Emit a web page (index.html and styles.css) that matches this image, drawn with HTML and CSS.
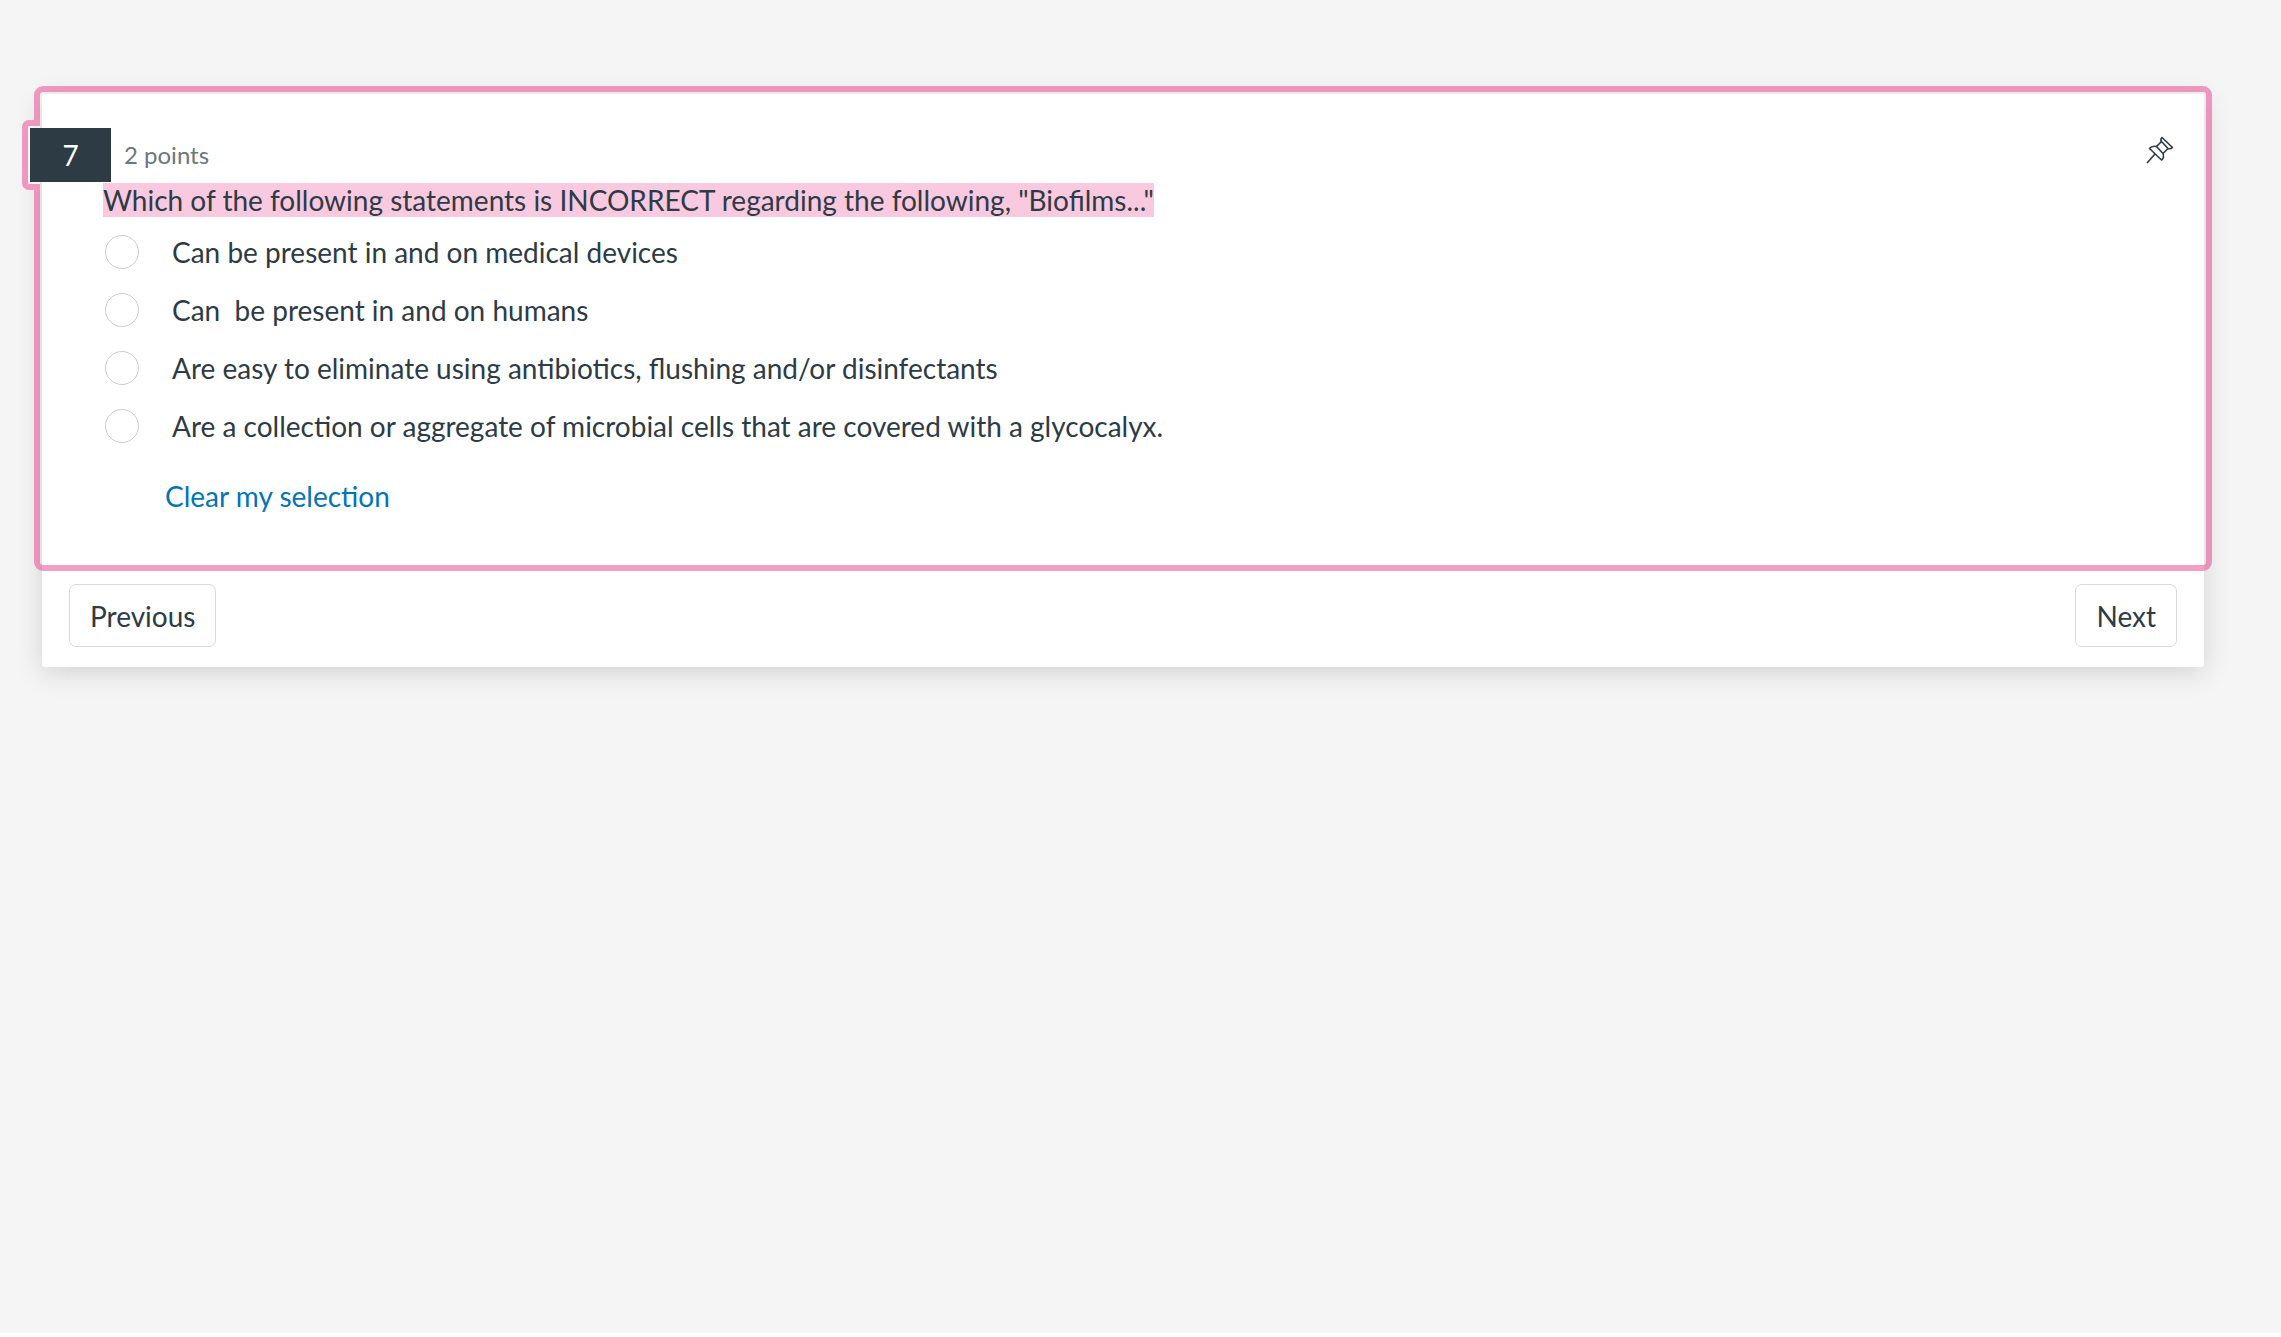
FILE: index.html
```html
<!DOCTYPE html>
<html lang="en">
<head>
    <meta charset="UTF-8">
    <meta name="viewport" content="width=device-width, initial-scale=1.0">
    <title>Quiz</title>
    <link rel="stylesheet" href="styles.css">
</head>
<body>
    <main class="card">
        <form class="question">
            <div class="question-header">
                <div class="number"><span class="number-label">7</span></div>
                <span class="points">2 points</span>
                <button type="button" class="pin" aria-label="Pin question">
                    <svg viewBox="0 0 28 28" width="28" height="28" fill="none" stroke="currentColor" stroke-width="1.6" stroke-linejoin="round">
                        <path d="M16 1.500 L26.500 11.500 C25 13 23.500 13 22 12.500 L15.500 5.500 C14.500 4 15 2.500 16 1.500 Z"/>
                        <path d="M15.500 5.500 L10.500 10.500 M22 12.500 L17 17.500"/>
                        <path d="M10.500 10.500 C8 10 5 10.500 3.500 12.500 L15.500 24 C17.500 22.500 18 20 17 17.500 Z"/>
                        <path d="M9 18 L1 27"/>
                    </svg>
                </button>
            </div>

            <fieldset class="options">
                <legend><span class="highlight">Which of the following statements is INCORRECT regarding the following, "Biofilms..."</span></legend>
                <label class="option"><input type="radio" name="answer" value="1">Can be present in and on medical devices</label>
                <label class="option"><input type="radio" name="answer" value="2">Can&nbsp; be present in and on humans</label>
                <label class="option"><input type="radio" name="answer" value="3">Are easy to eliminate using antibiotics, flushing and/or disinfectants</label>
                <label class="option"><input type="radio" name="answer" value="4">Are a collection or aggregate of microbial cells that are covered with a glycocalyx.</label>
            </fieldset>

            <button type="reset" class="clear">Clear my selection</button>
        </form>

        <nav class="footer">
            <button type="button" class="btn">Previous</button>
            <button type="button" class="btn">Next</button>
        </nav>
    </main>
</body>
</html>
```
FILE: styles.css
```css
* {
    box-sizing: border-box;
}
html {
    background-color: #fff;
}
body {
    min-height: calc(100vh - 4px);
    margin: 0;
    padding: 94px 77px 60px 42px;
    background-color: #f5f5f5;
    color: #2d3b45;
    font-family: Lato, sans-serif;
    font-size: 28px;
    line-height: 34px;
}
button {
    font: inherit;
    color: inherit;
    cursor: pointer;
}
.card {
    background-color: #fff;
    border-radius: 3px;
    box-shadow: 0 6px 28px rgba(0, 0, 0, 0.14);
}
.question {
    padding: 34px 26px 50px 61px;
    outline: 6px solid rgba(236, 72, 145, 0.53);
    outline-offset: 2px;
    border-radius: 1px;
}
.question-header {
    display: flex;
    align-items: center;
    height: 54px;
    margin-bottom: 1px;
}
.number {
    position: relative;
    z-index: 1;
    width: 81px;
    margin-left: -73px;
}
.number-label {
    display: block;
    line-height: 54px;
    text-align: center;
    color: #fff;
    background-color: #2d3b45;
}
/* pink frame that carries the question outline round the number */
.number::before {
    content: "";
    position: absolute;
    z-index: -1;
    top: -8px;
    bottom: -8px;
    left: -8px;
    width: 12px;
    border: 6px solid #ef97c0;
    border-right: none;
    border-radius: 7px 0 0 7px;
    background-color: #f5f5f5;
}
.points {
    margin-left: 13px;
    font-size: 24px;
    color: #6b7780;
}
.pin {
    display: flex;
    align-self: flex-start;
    margin: 4px 0 0 auto;
    padding: 4px;
    border: none;
    background: none;
}
.options {
    margin: 0;
    padding: 0;
    border: none;
}
.options legend {
    margin-bottom: 6px;
    padding: 0;
}
.highlight {
    background-color: #f9c9df;
}
.option {
    display: flex;
    align-items: center;
    gap: 33px;
    height: 58px;
    padding-left: 2px;
}
.option input {
    appearance: none;
    width: 34px;
    height: 34px;
    margin: 0;
    border: 1px solid #c7cdd1;
    border-radius: 50%;
    background-color: #fff;
}
.clear {
    display: block;
    margin: 24px 0 0 62px;
    padding: 0;
    border: none;
    background: none;
    color: #0374b5;
}
.footer {
    display: flex;
    justify-content: space-between;
    padding: 21px 27px 20px;
}
.btn {
    padding: 14px 20px 13px;
    border: 1px solid #d7d9db;
    border-radius: 7px;
    background-color: #fff;
}
```
